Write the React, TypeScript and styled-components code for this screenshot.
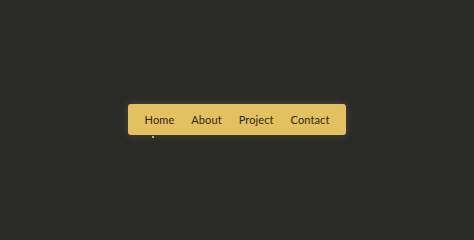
import React from "react";
import styled, { createGlobalStyle } from "styled-components";

const Global = createGlobalStyle`
  html, body { margin: 0; padding: 0; height: 100%; }
  body { background: #2a2a28; }
  #root { height: 100%; }
`;

const Page = styled.div`
  height: 100vh;
  box-sizing: border-box;
  padding-bottom: 2px;
  display: flex;
  align-items: center;
  justify-content: center;
`;

const Bar = styled.nav`
  position: relative;
  display: flex;
  align-items: center;
  gap: 17px;
  padding: 0 17px;
  height: 31px;
  background: #e3c060;
  border-radius: 3px;
  box-shadow: 0 0 8px rgba(227, 192, 96, 0.22);
`;

const Link = styled.a`
  font-family: Lato, "Open Sans", sans-serif;
  font-size: 11px;
  font-weight: 400;
  letter-spacing: 0.1px;
  color: #2e2717;
  text-decoration: none;
  line-height: 1;
`;

const Cursor = styled.span`
  position: absolute;
  left: 24px;
  top: 32px;
  width: 2px;
  height: 2px;
  background: #d8d8d0;
  border-radius: 1px;
`;

export default function App() {
  return (
    <>
      <Global />
      <Page>
        <Bar>
          {["Home", "About", "Project", "Contact"].map((t) => (
            <Link key={t} href="#">{t}</Link>
          ))}
          <Cursor />
        </Bar>
      </Page>
    </>
  );
}
